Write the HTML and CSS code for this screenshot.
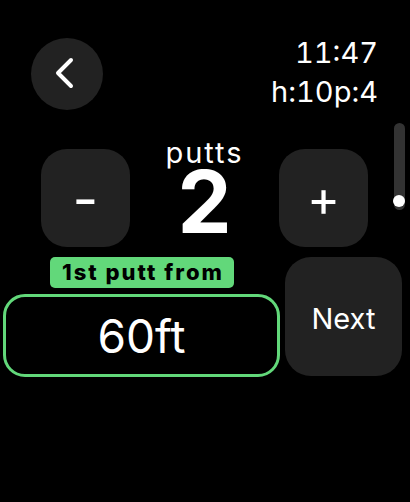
FILE: index.html
```html
<!DOCTYPE html>
<html lang="en">
<head>
  <meta charset="UTF-8" />
  <meta name="viewport" content="width=device-width, initial-scale=1.0" />
  <title>Putts</title>
  <link rel="stylesheet" href="styles.css">
</head>
<body>
  <div class="watch">
    <div class="top">
      <button class="back" aria-label="Back">
        <svg width="24" height="34" viewBox="0 0 24 34">
          <path d="M18 3 L5 16 L18 29" fill="none" stroke="#fff" stroke-width="4" stroke-linecap="round" stroke-linejoin="round" />
        </svg>
      </button>
      <div class="status">
        <div class="time">11:47</div>
        <div class="hole">h:10p:4</div>
      </div>
    </div>

    <div class="counter">
      <button class="step minus">-</button>
      <div class="count">
        <div class="label">putts</div>
        <div class="value">2</div>
      </div>
      <button class="step plus">+</button>
    </div>

    <div class="scroll"><span class="knob"></span></div>

    <div class="bottom">
      <div class="distance">
        <span class="tag">1st putt from</span>
        <div class="field">60ft</div>
      </div>
      <button class="next">Next</button>
    </div>
  </div>
</body>
</html>
```

FILE: styles.css
```css
body {
  margin: 0;
  background: #000;
  font-family: "Inter", "Noto Sans", sans-serif;
  color: #fff;
}

.watch {
  position: relative;
  width: 410px;
  height: 502px;
  overflow: hidden;
}

button {
  border: none;
  color: #fff;
  font-family: inherit;
  cursor: pointer;
  padding: 0;
}

.top {
  display: flex;
  justify-content: space-between;
  align-items: flex-start;
  padding: 38px 32px 0 31px;
}

.back {
  width: 72px;
  height: 72px;
  border-radius: 50%;
  background: #222;
  display: flex;
  align-items: center;
  justify-content: center;
}

.back svg {
  margin-left: -4px;
}

.status {
  text-align: right;
  font-size: 29px;
  line-height: 39px;
  margin-top: -5px;
  font-variant-numeric: tabular-nums;
}

.counter {
  display: flex;
  align-items: flex-start;
  padding-left: 41px;
  margin-top: 38px;
}

.step {
  width: 89px;
  height: 98px;
  border-radius: 26px;
  background: #222;
  font-size: 50px;
  font-weight: 400;
  line-height: 1;
}

.minus {
  font-size: 56px;
  padding-top: 2px;
}

.count {
  width: 149px;
  text-align: center;
  margin-top: -9px;
}

.count .label {
  font-size: 29px;
  line-height: 26px;
  letter-spacing: 2px;
}

.count .value {
  font-size: 86px;
  font-weight: 700;
  line-height: 72px;
}

/* crown scroll indicator */
.scroll {
  position: absolute;
  left: 394px;
  top: 123px;
  width: 11px;
  height: 87px;
  border-radius: 6px;
  background: #333;
}

.knob {
  position: absolute;
  left: -1px;
  top: 72px;
  width: 12px;
  height: 12px;
  border-radius: 50%;
  background: #fff;
}

.bottom {
  display: flex;
  align-items: flex-start;
  padding-left: 3px;
  margin-top: 10px;
}

.distance {
  width: 277px;
  display: flex;
  flex-direction: column;
  align-items: flex-start;
}

.tag {
  box-sizing: border-box;
  width: 184px;
  height: 31px;
  margin-left: 47px;
  padding-left: 2px;
  border-radius: 5px;
  background: #62d87a;
  color: #000;
  font-size: 22px;
  font-weight: 800;
  line-height: 31px;
  letter-spacing: 2px;
  text-align: center;
}

.field {
  box-sizing: border-box;
  width: 277px;
  height: 83px;
  margin-top: 6px;
  border: 3px solid #62d87a;
  border-radius: 22px;
  display: flex;
  align-items: center;
  justify-content: center;
  font-size: 46px;
}

.next {
  width: 117px;
  height: 119px;
  margin-left: 5px;
  padding-top: 3px;
  border-radius: 26px;
  background: #222;
  font-size: 29px;
}
```
